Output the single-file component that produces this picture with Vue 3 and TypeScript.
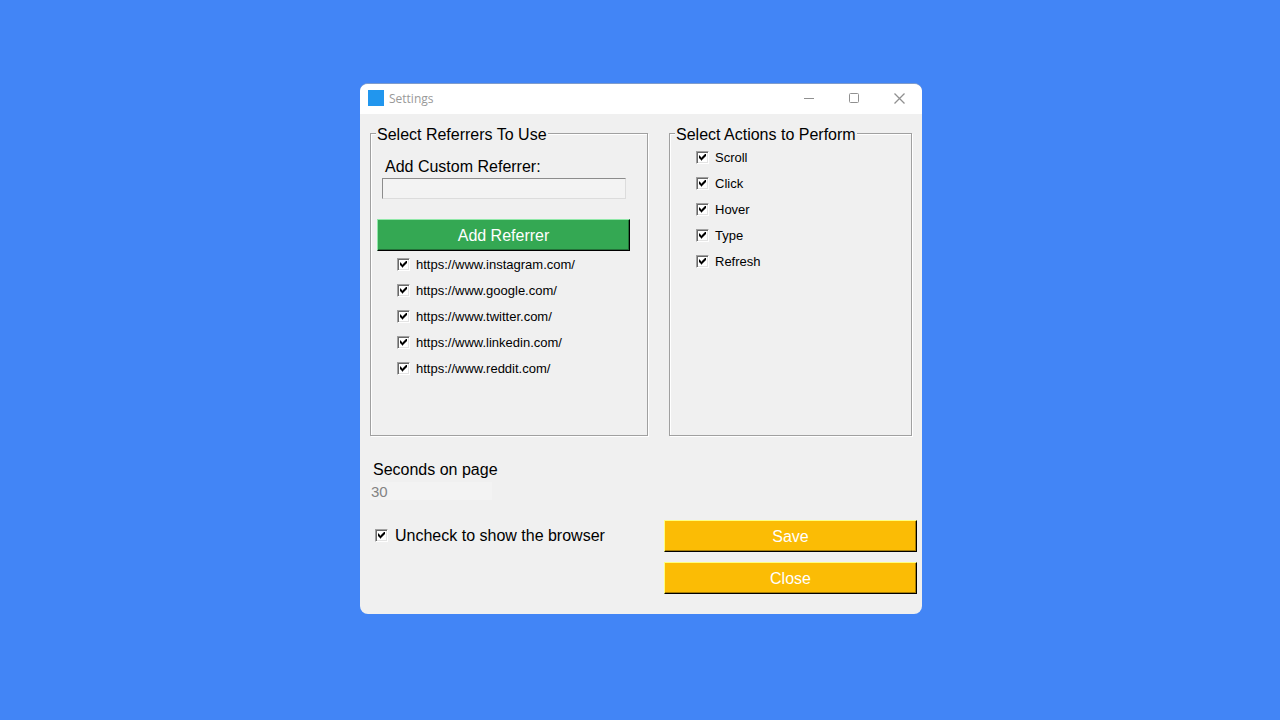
<script setup lang="ts">
import { ref } from 'vue'

interface Option {
  label: string
  checked: boolean
}

const referrers = ref<Option[]>([
  { label: 'https://www.instagram.com/', checked: true },
  { label: 'https://www.google.com/', checked: true },
  { label: 'https://www.twitter.com/', checked: true },
  { label: 'https://www.linkedin.com/', checked: true },
  { label: 'https://www.reddit.com/', checked: true },
])

const actions = ref<Option[]>([
  { label: 'Scroll', checked: true },
  { label: 'Click', checked: true },
  { label: 'Hover', checked: true },
  { label: 'Type', checked: true },
  { label: 'Refresh', checked: true },
])

const customReferrer = ref('')
const seconds = ref('30')
const headless = ref(true)

function addReferrer(): void {
  const label = customReferrer.value.trim()
  if (!label) return
  referrers.value.push({ label, checked: true })
  customReferrer.value = ''
}
</script>

<template>
  <main class="desktop">
    <section class="window" aria-label="Settings">
      <header class="titlebar">
        <span class="app-icon"></span>
        <span class="title">Settings</span>
        <button class="caption" type="button" aria-label="Minimize">
          <svg width="11" height="11" viewBox="0 0 11 11"><path d="M0 5.5H10" /></svg>
        </button>
        <button class="caption" type="button" aria-label="Maximize">
          <svg width="11" height="11" viewBox="0 0 11 11"><rect x="0.5" y="0.5" width="9" height="9" rx="1" /></svg>
        </button>
        <button class="caption" type="button" aria-label="Close window">
          <svg width="11" height="11" viewBox="0 0 11 11"><path class="cross" d="M0.5 0.5L10.5 10.5M10.5 0.5L0.5 10.5" /></svg>
        </button>
      </header>

      <div class="groups">
        <fieldset class="group">
          <legend>Select Referrers To Use</legend>
          <div class="custom">
            <label for="custom-referrer">Add Custom Referrer:</label>
            <input id="custom-referrer" v-model="customReferrer" class="sunken" type="text" />
          </div>
          <button class="push green" type="button" @click="addReferrer">Add Referrer</button>
          <div class="options">
            <label v-for="item in referrers" :key="item.label" class="option">
              <input v-model="item.checked" class="check" type="checkbox" />
              <span>{{ item.label }}</span>
            </label>
          </div>
        </fieldset>

        <fieldset class="group">
          <legend>Select Actions to Perform</legend>
          <div class="options">
            <label v-for="item in actions" :key="item.label" class="option">
              <input v-model="item.checked" class="check" type="checkbox" />
              <span>{{ item.label }}</span>
            </label>
          </div>
        </fieldset>
      </div>

      <footer class="footer">
        <div class="page-options">
          <label class="seconds-label" for="seconds">Seconds on page</label>
          <input id="seconds" v-model="seconds" class="seconds" type="text" />
          <label class="browser-option">
            <input v-model="headless" class="check" type="checkbox" />
            <span>Uncheck to show the browser</span>
          </label>
        </div>
        <div class="commands">
          <button class="push amber" type="button">Save</button>
          <button class="push amber" type="button">Close</button>
        </div>
      </footer>
    </section>
  </main>
</template>

<style>
body {
  margin: 0;
  background: #4285f6;
}
</style>

<style scoped>
.desktop {
  box-sizing: border-box;
  min-height: 100vh;
  padding: 83px 0 24px 2px;
  background: #4285f6;
  font-family: "Liberation Sans", Arial, sans-serif;
  font-size: 16px;
  line-height: 18px;
  color: #000;
}

.window {
  box-sizing: border-box;
  width: 100%;
  max-width: 562px;
  margin: 0 auto;
  overflow: hidden;
  border-top: 1px solid #7f9ccb;
  border-radius: 8px;
  background: #f0f0f0;
}

.titlebar {
  display: flex;
  align-items: center;
  height: 30px;
  padding-left: 8px;
  background: #fff;
}

.app-icon {
  width: 16px;
  height: 16px;
  margin-bottom: 2px;
  background: #2196ee;
}

.title {
  flex: 1;
  margin-left: 5px;
  font-family: "Open Sans", "Noto Sans", sans-serif;
  font-size: 12px;
  color: #999;
}

.caption {
  display: flex;
  align-items: center;
  justify-content: center;
  width: 45px;
  height: 30px;
  padding: 0 0 1px;
  border: 0;
  background: none;
}

.caption svg {
  fill: none;
  stroke: #909090;
  stroke-width: 1;
}

.caption .cross {
  stroke-width: 1.3;
}

.groups {
  display: grid;
  grid-template-columns: 278fr 243fr;
  gap: 21px;
  padding: 8px 10px 0;
}

.group {
  box-sizing: border-box;
  min-width: 0;
  min-height: 314px;
  margin: 0;
  padding: 0 17px 0 6px;
  border: 1px solid #a0a0a0;
  box-shadow: inset 1px 1px 0 #fff, 1px 1px 0 #fff;
}

.group legend {
  margin-left: -1px;
  padding: 4px 1px 0;
  background: #f0f0f0;
}

.custom {
  display: flex;
  flex-direction: column;
  gap: 2px;
  margin: 14px 4px 20px 5px;
}

.custom label {
  padding-left: 3px;
}

.sunken {
  box-sizing: border-box;
  width: 100%;
  height: 21px;
  padding: 0 3px;
  border: 1px solid;
  border-color: #8c8c8c #dcdcdc #dcdcdc #8c8c8c;
  border-radius: 0;
  background: #f3f3f3;
  font: inherit;
}

.push {
  box-sizing: border-box;
  display: block;
  width: 100%;
  height: 32px;
  padding: 2px 0 0;
  border: 1px solid;
  border-radius: 0;
  font: inherit;
  color: #fff;
}

.green {
  background: #34a853;
  border-color: #90e8a8 #000 #000 #90e8a8;
  box-shadow: inset -1px -1px 0 #237038;
}

.amber {
  background: #fbbc05;
  border-color: #ffff80 #000 #000 #ffff80;
  box-shadow: inset -1px -1px 0 #a77d03;
}

.options {
  display: flex;
  flex-direction: column;
  align-items: flex-start;
  padding-left: 20px;
}

.option {
  display: flex;
  align-items: center;
  gap: 6px;
  height: 26px;
  font-size: 13px;
}

.option span,
.browser-option span {
  padding-top: 2px;
}

.check {
  display: grid;
  place-items: center;
  flex: none;
  box-sizing: border-box;
  width: 13px;
  height: 13px;
  margin: 0;
  appearance: none;
  border: 1px solid;
  border-color: #a0a0a0 #fff #fff #a0a0a0;
  background: #fff;
  box-shadow: inset 1px 1px 0 #696969, inset -1px -1px 0 #e3e3e3;
}

.check:checked::before {
  content: "";
  width: 7px;
  height: 7px;
  background: #000;
  clip-path: polygon(0 2px, 1px 2px, 1px 3px, 2px 3px, 2px 4px, 3px 4px, 3px 3px, 4px 3px, 4px 2px, 5px 2px, 5px 1px, 6px 1px, 6px 0, 7px 0, 7px 3px, 6px 3px, 6px 4px, 5px 4px, 5px 5px, 4px 5px, 4px 6px, 3px 6px, 3px 7px, 2px 7px, 2px 6px, 1px 6px, 1px 5px, 0 5px);
}

.footer {
  display: grid;
  grid-template-columns: 1fr 253px;
  padding: 25px 5px 20px 10px;
}

.page-options {
  display: flex;
  flex-direction: column;
  align-items: flex-start;
}

.seconds-label {
  padding-left: 3px;
}

.seconds {
  box-sizing: border-box;
  width: 122px;
  height: 18px;
  margin: 3px 0 25px;
  padding: 0 1px;
  border: 0;
  background: #f3f3f3;
  font-family: inherit;
  font-size: 15px;
  color: #838383;
}

.browser-option {
  display: flex;
  align-items: center;
  gap: 7px;
  padding-left: 5px;
}

.commands {
  display: grid;
  gap: 10px;
  padding-top: 59px;
}
</style>
